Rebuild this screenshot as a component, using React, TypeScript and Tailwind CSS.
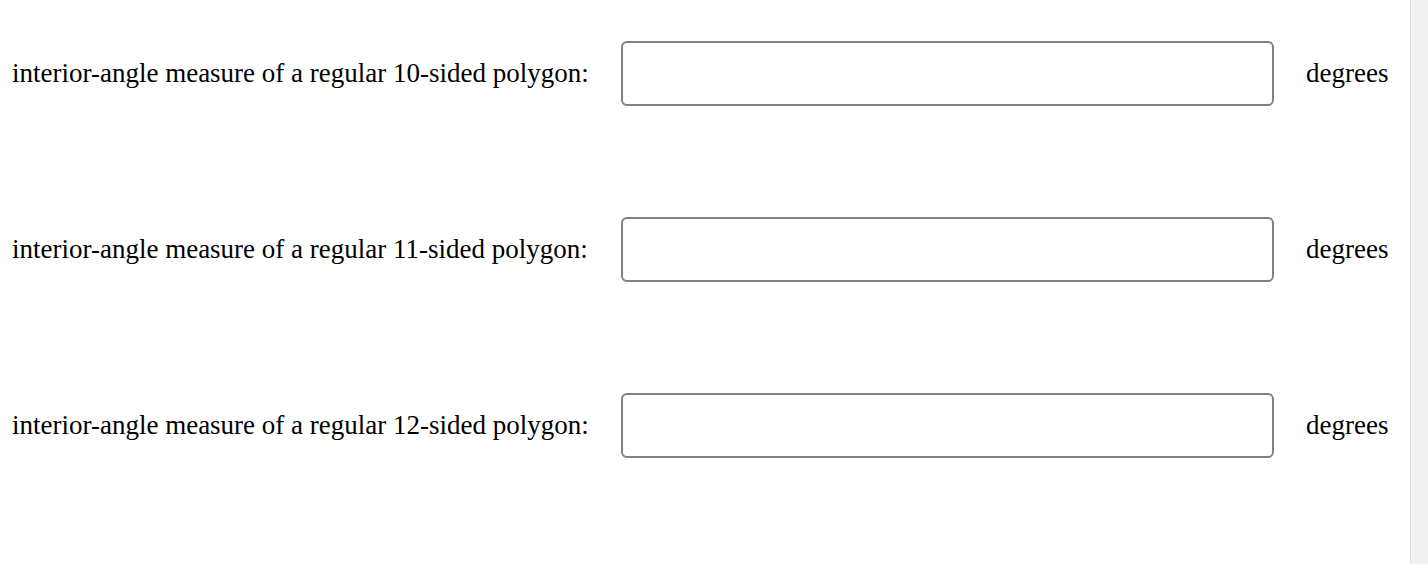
import React from 'react';

// Interior angle questions, one per polygon size
const sides = [10, 11, 12];

const AngleRow: React.FC<{ n: number }> = ({ n }) => (
  <div className="grid grid-cols-[609px_653px_1fr] items-center h-[65px]">
    <label htmlFor={`angle-${n}`} className="whitespace-nowrap">
      interior-angle measure of a regular {n}-sided polygon:
    </label>
    <input
      id={`angle-${n}`}
      type="text"
      className="h-[65px] w-[653px] rounded-[6px] border-2 border-[#828282] bg-white px-3 outline-none"
    />
    <span className="pl-[32px]">degrees</span>
  </div>
);

const App: React.FC = () => {
  return (
    <div className="flex h-[564px] w-full overflow-hidden bg-white text-black">
      <div
        className="flex-1 pl-[12px] pt-[41px] flex flex-col gap-y-[111px] text-[27px] leading-none"
        style={{ fontFamily: '"Liberation Serif", "Times New Roman", serif' }}
      >
        {sides.map((n) => (
          <AngleRow key={n} n={n} />
        ))}
      </div>
      {/* scrollbar track */}
      <div className="w-[18px] h-full bg-[#f1f1f1] border-l border-[#dedede]" />
    </div>
  );
};

export default App;
